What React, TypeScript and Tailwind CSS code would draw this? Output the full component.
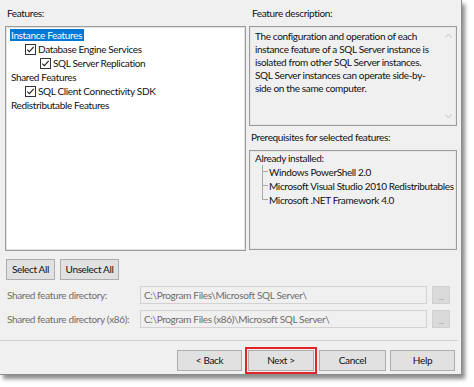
import React from "react";

const Check = () => (
  <svg width="11" height="11" viewBox="0 0 11 11" className="shrink-0">
    <rect x="0.5" y="0.5" width="10" height="10" fill="#fff" stroke="#333" />
    <path d="M2.3 5.6 L4.4 7.7 L8.7 2.9" fill="none" stroke="#222" strokeWidth="1.1" />
  </svg>
);

const Btn = ({ label, w }: { label: string; w: string }) => (
  <div
    className={`${w} h-[21px] flex items-center justify-center bg-[#e1e1e1] border border-[#adadad] text-[#111]`}
  >
    {label}
  </div>
);

const prereqs = [
  "Windows PowerShell 2.0",
  "Microsoft Visual Studio 2010 Redistributables",
  "Microsoft .NET Framework 4.0",
];

export default function App() {
  return (
    <div className="w-[474px] h-[387px] bg-white overflow-hidden">
      <div className="w-[462px] h-[375px] bg-[#f0f0f0] border-r border-b border-[#8c8c8c] shadow-[3px_4px_4px_rgba(0,0,0,0.45)] flex flex-col text-[10px] tracking-[-0.35px] text-[#111] font-['Lato','Noto_Sans',sans-serif] whitespace-nowrap">
        {/* top panels */}
        <div className="flex pl-[5px]">
          <div className="w-[241px] flex flex-col">
            <div className="h-[26px] pl-[2px] leading-[26px]">Features:</div>
            <div className="h-[225px] bg-white border border-[#9c9c9c] shadow-[inset_0_0_0_1px_#e2e2e2] pt-[1px] pl-[1px]">
              <div className="h-[14px] flex items-center pl-[3px]">
                <span className="h-[12px] leading-[12px] pl-[1px] pr-[2px] bg-[#0078d7] text-white">
                  Instance Features
                </span>
              </div>
              <div className="h-[14px] flex items-center pl-[18px] gap-[2px]">
                <Check />
                <span>Database Engine Services</span>
              </div>
              <div className="h-[14px] flex items-center pl-[33px] gap-[2px]">
                <Check />
                <span>SQL Server Replication</span>
              </div>
              <div className="h-[14px] flex items-center pl-[4px]">Shared Features</div>
              <div className="h-[14px] flex items-center pl-[18px] gap-[2px]">
                <Check />
                <span>SQL Client Connectivity SDK</span>
              </div>
              <div className="h-[14px] flex items-center pl-[4px]">Redistributable Features</div>
            </div>
          </div>

          <div className="w-[208px] ml-[3px] flex flex-col">
            <div className="h-[26px] pl-[3px] leading-[26px]">Feature description:</div>
            <div className="h-[100px] border border-[#9c9c9c] shadow-[inset_0_0_0_1px_#e6e6e6] flex">
              <div className="flex-1 pl-[5px] pt-[3px] leading-[13px]">
                The configuration and operation of each
                <br />
                instance feature of a SQL Server instance is
                <br />
                isolated from other SQL Server instances.
                <br />
                SQL Server instances can operate side-by-
                <br />
                side on the same computer.
              </div>
              <div className="w-[16px] shrink-0 flex flex-col justify-between items-center py-[6px]">
                <svg width="7" height="5" viewBox="0 0 7 5">
                  <path d="M0.5 4.5 L3.5 1 L6.5 4.5" fill="none" stroke="#c2c2c2" />
                </svg>
                <svg width="7" height="5" viewBox="0 0 7 5">
                  <path d="M0.5 0.5 L3.5 4 L6.5 0.5" fill="none" stroke="#c2c2c2" />
                </svg>
              </div>
            </div>
            <div className="h-[24px] pl-[2px] pt-[4px] leading-[14px]">
              Prerequisites for selected features:
            </div>
            <div className="h-[100px] border border-[#9c9c9c] shadow-[inset_0_0_0_1px_#e6e6e6] overflow-hidden">
              <div className="h-[14px] flex items-center pl-[5px]">Already installed:</div>
              {prereqs.map((p, i) => (
                <div key={p} className="h-[14px] flex items-center pl-[12px]">
                  <div className="w-[6px] h-[14px] shrink-0 flex flex-col">
                    <div className="h-[7px] border-l border-b border-[#a8a8a8]" />
                    <div
                      className={`h-[7px] ${
                        i < prereqs.length - 1 ? "border-l border-[#a8a8a8]" : ""
                      }`}
                    />
                  </div>
                  <span className="ml-[1px]">{p}</span>
                </div>
              ))}
            </div>
          </div>
        </div>

        {/* select buttons */}
        <div className="flex gap-[5px] pl-[6px] mt-[8px]">
          <Btn label="Select All" w="w-[49px]" />
          <Btn label="Unselect All" w="w-[59px]" />
        </div>

        {/* directories */}
        <div className="flex items-center mt-[6px] h-[18px]">
          <div className="w-[140px] pl-[7px] text-[#6d6d6d]">Shared feature directory:</div>
          <div className="w-[287px] h-[18px] border border-[#d2d2d2] flex items-center pl-[3px] text-[#6d6d6d]">
            C:\Program Files\Microsoft SQL Server\
          </div>
          <div className="w-[18px] h-[18px] ml-[5px] bg-[#dadada] border border-[#d0d0d0] flex items-end justify-center text-[8px] leading-[11px] text-[#9a9a9a]">
            ...
          </div>
        </div>
        <div className="flex items-center mt-[6px] h-[18px]">
          <div className="w-[140px] pl-[7px] text-[#6d6d6d]">
            Shared feature directory (x86):
          </div>
          <div className="w-[287px] h-[18px] border border-[#d2d2d2] flex items-center pl-[3px] text-[#6d6d6d]">
            C:\Program Files (x86)\Microsoft SQL Server\
          </div>
          <div className="w-[18px] h-[18px] ml-[5px] bg-[#dadada] border border-[#d0d0d0] flex items-end justify-center text-[8px] leading-[11px] text-[#9a9a9a]">
            ...
          </div>
        </div>

        {/* separator */}
        <div className="mt-[12px] h-[1px] bg-[#d4d4d4] w-[458px]" />

        {/* wizard buttons */}
        <div className="flex mt-[9px] pl-[177px]">
          <Btn label="< Back" w="w-[65px]" />
          <div className="ml-[6px] outline-2 outline-[#e0262c] outline-offset-[1px]">
            <Btn label="Next >" w="w-[66px]" />
          </div>
          <div className="ml-[5px]">
            <Btn label="Cancel" w="w-[67px]" />
          </div>
          <div className="ml-[4px]">
            <Btn label="Help" w="w-[65px]" />
          </div>
        </div>
      </div>
    </div>
  );
}
